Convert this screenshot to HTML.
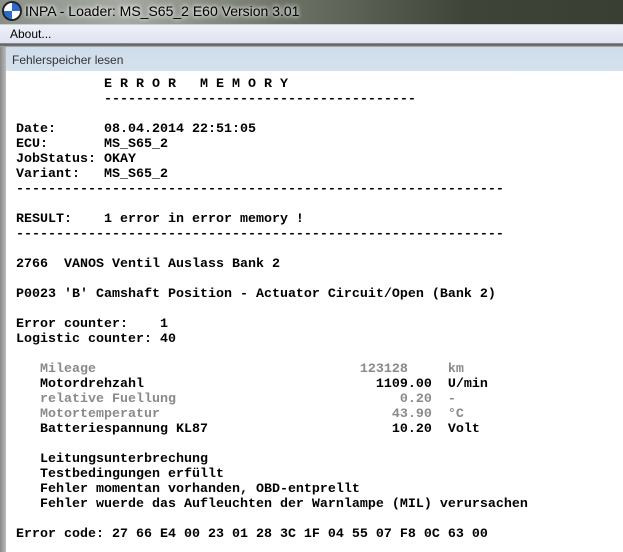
<!DOCTYPE html>
<html><head><meta charset="utf-8"><style>
*{margin:0;padding:0}
body{width:623px;height:552px;overflow:hidden;background:#fff;position:relative;font-family:"Liberation Sans",sans-serif}
#title{position:absolute;left:0;top:0;width:623px;height:24px;background:linear-gradient(90deg,#8a9088 0%,#a5aaa2 20%,#6e7468 45%,#3e4438 75%,#3a3f34 100%)}
#title span{position:absolute;left:25px;top:3px;font-size:14px;color:#000;text-shadow:0 0 6px #fff,0 0 4px #fff}
#logo{position:absolute;left:4px;top:3px;width:16px;height:16px;border-radius:50%;background:conic-gradient(#2a6bd0 0 25%,#fff 0 50%,#2a6bd0 0 75%,#fff 0);box-shadow:0 0 0 2px #222}
#menu{position:absolute;left:0;top:24px;width:623px;height:19px;background:linear-gradient(#eef0f8,#dfe3f0);border-top:1px solid #ccc}
#menu span{position:absolute;left:10px;top:2px;font-size:12px}
#sep{position:absolute;left:0;top:43px;width:623px;height:4px;background:linear-gradient(#9a9a9a,#555 50%,#c0c0c0)}
#cap{position:absolute;left:6px;top:47px;width:617px;height:24px;background:linear-gradient(#cfdcea,#d4e1ee)}
#cap span{position:absolute;left:6px;top:6px;font-size:12px;color:#333}
#lb{position:absolute;left:0;top:47px;width:6px;height:505px;background:linear-gradient(90deg,#888,#bbb)}
pre{position:absolute;left:16px;top:77px;font-family:"Liberation Mono",monospace;font-size:13.33px;line-height:15px;font-weight:bold;color:#000}
.g{color:#8a8a8a}
</style></head><body>
<div id="title"><div id="logo"></div><span>INPA - Loader:  MS_S65_2 E60 Version 3.01</span></div>
<div id="menu"><span>About...</span></div>
<div id="sep"></div>
<div id="lb"></div>
<div id="cap"><span>Fehlerspeicher lesen</span></div>
<pre>           E R R O R   M E M O R Y
           ---------------------------------------

Date:      08.04.2014 22:51:05
ECU:       MS_S65_2
JobStatus: OKAY
Variant:   MS_S65_2
-------------------------------------------------------------

RESULT:    1 error in error memory !
-------------------------------------------------------------

2766  VANOS Ventil Auslass Bank 2

P0023 'B' Camshaft Position - Actuator Circuit/Open (Bank 2)

Error counter:    1
Logistic counter: 40

<span class="g">   Mileage                                 123128     km</span>
   Motordrehzahl                             1109.00  U/min
<span class="g">   relative Fuellung                            0.20  -</span>
<span class="g">   Motortemperatur                             43.90  °C</span>
   Batteriespannung KL87                       10.20  Volt

   Leitungsunterbrechung
   Testbedingungen erfüllt
   Fehler momentan vorhanden, OBD-entprellt
   Fehler wuerde das Aufleuchten der Warnlampe (MIL) verursachen

Error code: 27 66 E4 00 23 01 28 3C 1F 04 55 07 F8 0C 63 00
</pre>
</body></html>
